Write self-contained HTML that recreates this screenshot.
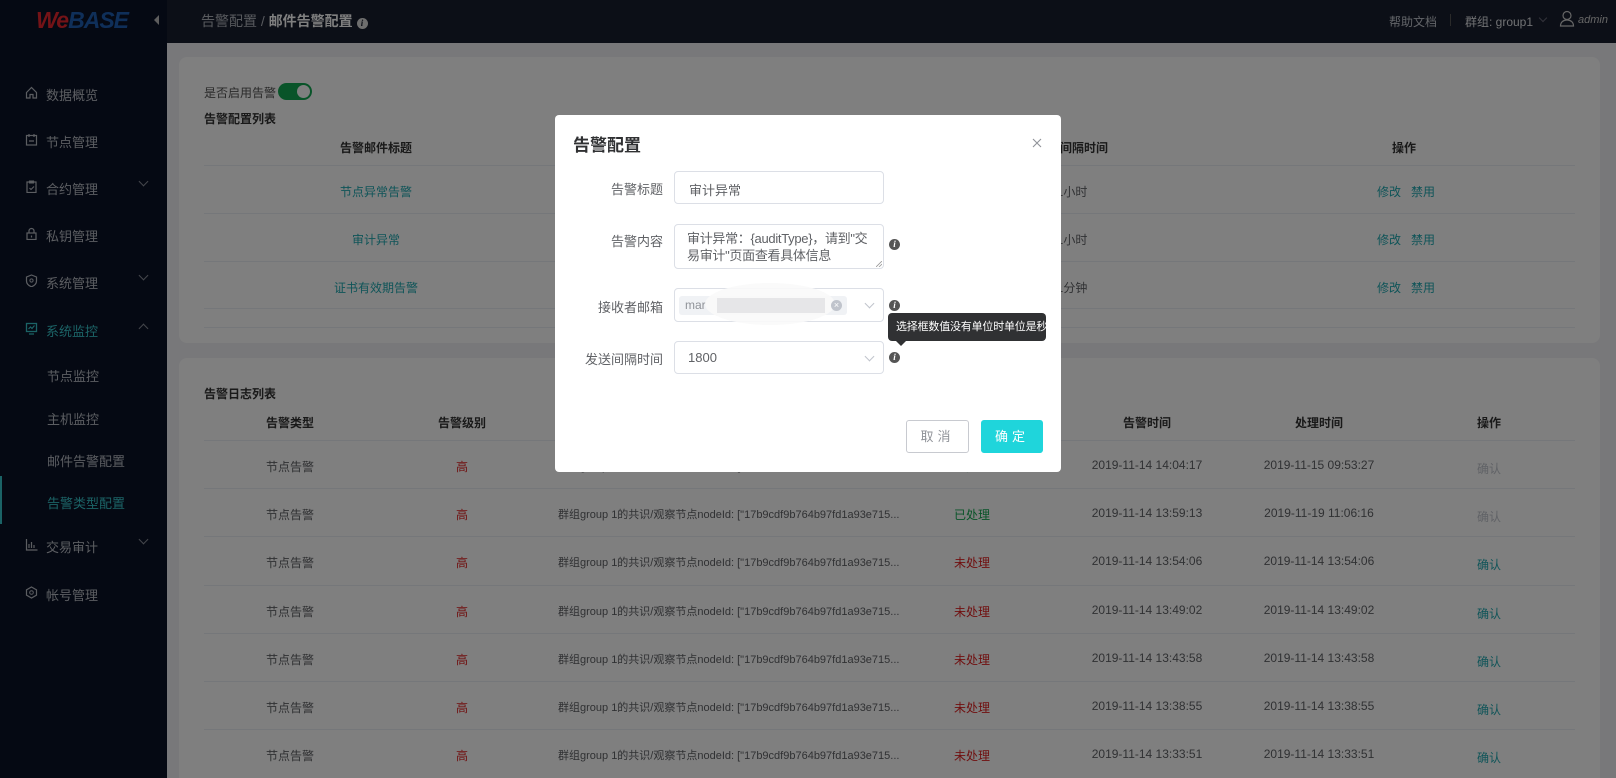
<!DOCTYPE html>
<html><head><meta charset="utf-8"><style>
*{margin:0;padding:0;box-sizing:border-box}
html,body{width:1616px;height:778px;overflow:hidden}
body{position:relative;background:#f0f1f4;font-family:"Liberation Sans","Noto Sans CJK SC",sans-serif;font-size:12px;color:#606266}
.a{position:absolute;white-space:nowrap}
#side{position:absolute;left:0;top:0;width:167px;height:778px;background:#0b1226}
#head{position:absolute;left:167px;top:0;width:1449px;height:43px;background:#181e2e}
.card{position:absolute;background:#fff;border-radius:8px}
.nav{position:absolute;left:31px;font-size:13px;color:#b8bcc4;white-space:nowrap;width:130px;height:16px}
.nav svg{position:absolute;left:-6px;top:1px}
.nav span{position:absolute;left:15px;top:0;white-space:nowrap}
.sub{position:absolute;left:47px;font-size:13px;color:#b8bcc4;white-space:nowrap}
.chev{position:absolute;left:140px;width:7px;height:7px;border-right:1px solid #8a8f99;border-bottom:1px solid #8a8f99;transform:rotate(45deg)}
.th{font-weight:bold;color:#333;font-size:12px;transform:translateX(-50%)}
.c{transform:translateX(-50%)}
.line{position:absolute;height:1px;background:#ebeef5}
.teal{color:#1fa9b1}
.red{color:#e02020}
#mask{position:fixed;left:0;top:0;width:1616px;height:778px;background:rgba(0,0,0,.5)}
#modal{position:absolute;left:555px;top:115px;width:506px;height:357px;background:#fff;border-radius:4px}
.lbl{position:absolute;font-size:13px;color:#606266;text-align:right;width:130px;left:-22px;white-space:nowrap}
.inp{position:absolute;left:119px;width:210px;border:1px solid #dcdfe6;border-radius:4px;background:#fff;font-size:13px;color:#606266}
.info{position:absolute;left:334px;width:11px;height:11px;border-radius:50%;background:#555;color:#fff;font-size:9px;font-weight:bold;font-style:italic;text-align:center;line-height:11px;font-family:"Liberation Serif",serif}
.dd{position:absolute;right:10px;top:11px;width:7px;height:7px;border-right:1px solid #c0c4cc;border-bottom:1px solid #c0c4cc;transform:rotate(45deg)}
</style></head><body>

<div id="side">
  <div class="a" style="left:36px;top:7px;font-size:23px;font-weight:bold;font-style:italic;letter-spacing:-1px"><span style="color:#e8262e">We</span><span style="color:#1f5fb3">BASE</span></div>
  <div class="a" style="left:154px;top:15px;width:0;height:0;border-top:5px solid transparent;border-bottom:5px solid transparent;border-right:5px solid #bbb"></div>

  <div class="nav" style="top:85px"><svg width="13" height="13" viewBox="0 0 13 13"><path d="M1.5 6.5L6.5 1.5 11.5 6.5V12H8V8.5H5V12H1.5Z" fill="none" stroke="#b8bcc4" stroke-width="1.2"/></svg><span>数据概览</span></div>
  <div class="nav" style="top:132px"><svg width="13" height="13" viewBox="0 0 13 13"><rect x="1.5" y="2.5" width="10" height="9.5" fill="none" stroke="#b8bcc4" stroke-width="1.2"/><path d="M4 1v3M9 1v3M4 8h5" stroke="#b8bcc4" stroke-width="1.2"/></svg><span>节点管理</span></div>
  <div class="nav" style="top:179px"><svg width="13" height="13" viewBox="0 0 13 13"><rect x="2" y="2" width="9" height="10.5" fill="none" stroke="#b8bcc4" stroke-width="1.2"/><path d="M4.5 1h4v2h-4zM4.5 8l1.5 1.5 3-3" fill="none" stroke="#b8bcc4" stroke-width="1.1"/></svg><span>合约管理</span></div>
  <div class="chev" style="top:178px"></div>
  <div class="nav" style="top:226px"><svg width="13" height="13" viewBox="0 0 13 13"><rect x="2" y="6" width="9" height="6.5" fill="none" stroke="#b8bcc4" stroke-width="1.2"/><path d="M4 6V4a2.5 2.5 0 0 1 5 0v2M6.5 8.5v2" fill="none" stroke="#b8bcc4" stroke-width="1.2"/></svg><span>私钥管理</span></div>
  <div class="nav" style="top:273px"><svg width="13" height="13" viewBox="0 0 13 13"><path d="M6.5 1L11.5 3v4c0 3-2.5 4.8-5 5.8C4 11.8 1.5 10 1.5 7V3Z" fill="none" stroke="#b8bcc4" stroke-width="1.2"/><circle cx="6.5" cy="6.5" r="1.6" fill="none" stroke="#b8bcc4"/></svg><span>系统管理</span></div>
  <div class="chev" style="top:272px"></div>
  <div class="nav" style="top:321px;color:#37c6cc"><svg width="13" height="13" viewBox="0 0 13 13"><rect x="1.5" y="1.5" width="10" height="8" fill="none" stroke="#37c6cc" stroke-width="1.3"/><path d="M3.5 7l2-2 1.5 1.5 2.5-3M4 12h5" fill="none" stroke="#37c6cc" stroke-width="1.2"/></svg><span>系统监控</span></div>
  <div class="chev" style="top:325px;transform:rotate(225deg)"></div>
  <div class="sub" style="top:366px">节点监控</div>
  <div class="sub" style="top:409px">主机监控</div>
  <div class="sub" style="top:451px">邮件告警配置</div>
  <div class="a" style="left:0;top:476px;width:2px;height:48px;background:#37c6cc"></div>
  <div class="sub" style="top:493px;color:#37c6cc">告警类型配置</div>
  <div class="nav" style="top:537px"><svg width="13" height="13" viewBox="0 0 13 13"><path d="M1.5 1v11h11M4 10V6M6.5 10V4M9 10V7" fill="none" stroke="#b8bcc4" stroke-width="1.2"/></svg><span>交易审计</span></div>
  <div class="chev" style="top:536px"></div>
  <div class="nav" style="top:585px"><svg width="13" height="13" viewBox="0 0 13 13"><path d="M6.5 1l5 2.8v5.4l-5 2.8-5-2.8V3.8Z" fill="none" stroke="#b8bcc4" stroke-width="1.2"/><circle cx="6.5" cy="6.5" r="1.8" fill="none" stroke="#b8bcc4"/></svg><span>帐号管理</span></div>
</div>

<div id="head">
  <div class="a" style="left:34px;top:11px;font-size:14px;color:#b0b4bc">告警配置 / <b style="color:#fff">邮件告警配置</b> <span style="display:inline-block;width:11px;height:11px;border-radius:50%;background:#ddd;color:#181e2e;font-size:9px;text-align:center;line-height:11px;font-weight:bold;font-style:italic;font-family:'Liberation Serif',serif;vertical-align:0">i</span></div>
  <div class="a" style="left:1222px;top:13px;font-size:12px;color:#c4c8d0">帮助文档</div>
  <div class="a" style="left:1283px;top:14px;width:1px;height:12px;background:#555"></div>
  <div class="a" style="left:1298px;top:13px;font-size:12px;color:#e0e2e6">群组: group1</div>
  <div class="a" style="left:1373px;top:15px;width:6px;height:6px;border-right:1px solid #667;border-bottom:1px solid #667;transform:rotate(45deg)"></div>
  <svg class="a" style="left:1392px;top:10px" width="16" height="17" viewBox="0 0 16 17"><circle cx="8" cy="5.5" r="4" fill="none" stroke="#ccc" stroke-width="1.2"/><path d="M1.5 16c0-4 3-6 6.5-6s6.5 2 6.5 6Z" fill="none" stroke="#ccc" stroke-width="1.2"/></svg>
  <div class="a" style="left:1411px;top:14px;font-size:11px;font-style:italic;color:#ccc">admin</div>
</div>

<div class="card" style="left:179px;top:57px;width:1421px;height:286px"></div>
<div class="card" style="left:179px;top:358px;width:1421px;height:420px;border-radius:8px 8px 0 0"></div>

<div class="a" style="left:204px;top:84px;font-size:12px;color:#555">是否启用告警</div>
<div class="a" style="left:278px;top:83px;width:34px;height:17px;border-radius:9px;background:#13a852"><div style="position:absolute;right:2px;top:2px;width:13px;height:13px;border-radius:50%;background:#fff"></div></div>
<div class="a" style="left:204px;top:110px;font-size:12px;font-weight:bold;color:#333">告警配置列表</div>
<div class="a th" style="left:376px;top:139px">告警邮件标题</div>
<div class="a th" style="left:1072px;top:139px">发送间隔时间</div>
<div class="a th" style="left:1404px;top:139px">操作</div>
<div class="line" style="left:204px;top:165px;width:1371px"></div>
<div class="line" style="left:204px;top:213px;width:1371px"></div>
<div class="line" style="left:204px;top:261px;width:1371px"></div>
<div class="line" style="left:204px;top:308px;width:1371px"></div>
<div class="line" style="left:204px;top:327px;width:1371px"></div>
<div class="a c teal" style="left:376px;top:183px">节点异常告警</div>
<div class="a c teal" style="left:376px;top:231px">审计异常</div>
<div class="a c teal" style="left:376px;top:279px">证书有效期告警</div>
<div class="a c" style="left:1072px;top:183px">1小时</div>
<div class="a c" style="left:1072px;top:231px">1小时</div>
<div class="a c" style="left:1072px;top:279px">1分钟</div>
<div class="a teal" style="left:1377px;top:183px">修改</div><div class="a teal" style="left:1411px;top:183px">禁用</div>
<div class="a teal" style="left:1377px;top:231px">修改</div><div class="a teal" style="left:1411px;top:231px">禁用</div>
<div class="a teal" style="left:1377px;top:279px">修改</div><div class="a teal" style="left:1411px;top:279px">禁用</div>

<div class="a" style="left:204px;top:385px;font-size:12px;font-weight:bold;color:#333">告警日志列表</div>
<div class="a th" style="left:290px;top:414px">告警类型</div>
<div class="a th" style="left:462px;top:414px">告警级别</div>
<div class="a th" style="left:700px;top:414px">告警内容</div>
<div class="a th" style="left:972px;top:414px">状态</div>
<div class="a th" style="left:1147px;top:414px">告警时间</div>
<div class="a th" style="left:1319px;top:414px">处理时间</div>
<div class="a th" style="left:1489px;top:414px">操作</div>

<div id="rows"></div>
<script>
var d=[["2019-11-14 14:04:17","2019-11-15 09:53:27",1],["2019-11-14 13:59:13","2019-11-19 11:06:16",1],["2019-11-14 13:54:06","2019-11-14 13:54:06",0],["2019-11-14 13:49:02","2019-11-14 13:49:02",0],["2019-11-14 13:43:58","2019-11-14 13:43:58",0],["2019-11-14 13:38:55","2019-11-14 13:38:55",0],["2019-11-14 13:33:51","2019-11-14 13:33:51",0]];
var h="";
for(var i=0;i<7;i++){var y=458+i*48.2;
h+='<div class="line" style="left:204px;top:'+(y-18)+'px;width:1371px"></div>';
h+='<div class="a c" style="left:290px;top:'+y+'px">节点告警</div>';
h+='<div class="a c red" style="left:462px;top:'+y+'px">高</div>';
h+='<div class="a" style="left:558px;top:'+y+'px;font-size:11px">群组group 1的共识/观察节点nodeId: ["17b9cdf9b764b97fd1a93e715...</div>';
h+='<div class="a c" style="left:972px;top:'+y+'px;color:'+(d[i][2]?'#13a852':'#e02020')+'">'+(d[i][2]?'已处理':'未处理')+'</div>';
h+='<div class="a c" style="left:1147px;top:'+y+'px">'+d[i][0]+'</div>';
h+='<div class="a c" style="left:1319px;top:'+y+'px">'+d[i][1]+'</div>';
h+='<div class="a c" style="left:1489px;top:'+(y+2)+'px;color:'+(d[i][2]?'#c0c4cc':'#1fa9b1')+'">确认</div>';}
document.getElementById('rows').innerHTML=h;
</script>

<div id="mask"></div>

<div id="modal">
  <div class="a" style="left:18px;top:16px;font-size:17px;font-weight:bold;color:#303133">告警配置</div>
  <svg class="a" style="left:477px;top:23px" width="10" height="10" viewBox="0 0 10 10"><path d="M1 1l8 8M9 1l-8 8" stroke="#909399" stroke-width="1.1"/></svg>

  <div class="lbl" style="top:64px">告警标题</div>
  <div class="inp" style="top:56px;height:33px;padding:8px 14px">审计异常</div>

  <div class="lbl" style="top:116px">告警内容</div>
  <div class="inp" style="top:109px;height:45px;padding:5px 4px 5px 12px;line-height:17px;white-space:normal;letter-spacing:-0.3px">审计异常：{auditType}，请到"交易审计"页面查看具体信息
    <svg style="position:absolute;right:1px;bottom:1px" width="6" height="6" viewBox="0 0 6 6"><path d="M0 6L6 0M3 6L6 3" stroke="#999" stroke-width=".8"/></svg></div>
  <div class="info" style="top:124px">i</div>

  <div class="lbl" style="top:182px">接收者邮箱</div>
  <div class="inp" style="top:173px;height:34px">
    <div style="position:absolute;left:4px;top:7px;width:168px;height:19px;background:#f0f2f5;border-radius:3px;font-size:12px;color:#909399;padding:2px 6px">mar</div>
    <div style="position:absolute;left:30px;top:-6px;width:130px;height:42px;background:#fafafa;border-radius:50%;opacity:.9"></div>
    <div style="position:absolute;left:42px;top:9px;width:108px;height:15px;background:#e6e6e8"></div>
    <div style="position:absolute;left:156px;top:11px;width:11px;height:11px;border-radius:50%;background:#c0c4cc;color:#fff;font-size:9px;line-height:11px;text-align:center">×</div>
    <div class="dd"></div>
  </div>
  <div class="info" style="top:185px">i</div>

  <div class="a" style="left:333px;top:198px;width:158px;height:28px;background:#303133;border-radius:4px;color:#fff;font-size:11px;line-height:28px;padding-left:8px;letter-spacing:-0.2px">选择框数值没有单位时单位是秒</div>
  <div class="a" style="left:341px;top:226px;width:0;height:0;border-left:5px solid transparent;border-right:5px solid transparent;border-top:5px solid #303133"></div>

  <div class="lbl" style="top:234px">发送间隔时间</div>
  <div class="inp" style="top:226px;height:33px;padding:8px 13px">1800<div class="dd"></div></div>
  <div class="info" style="top:237px">i</div>

  <div class="a" style="left:351px;top:305px;width:63px;height:33px;border:1px solid #c8cad0;border-radius:3px;color:#909399;font-size:13px;text-align:center;line-height:31px;letter-spacing:4px">取消</div>
  <div class="a" style="left:426px;top:305px;width:62px;height:33px;background:#1fd5db;border-radius:3px;color:#fff;font-size:13px;text-align:center;line-height:33px;letter-spacing:4px">确定</div>
</div>
</body></html>
